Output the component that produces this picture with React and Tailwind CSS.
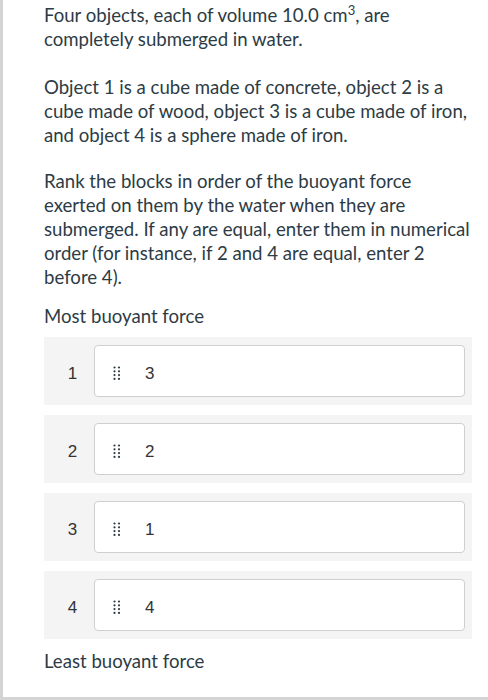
import React from 'react';

const rows = [
  { rank: 1, value: '3' },
  { rank: 2, value: '2' },
  { rank: 3, value: '1' },
  { rank: 4, value: '4' },
];

const Grip = () => (
  <svg width="8" height="16" viewBox="0 0 8 16" className="shrink-0">
    {[1.5, 5.3, 9.1, 12.9].map((y) =>
      [1.5, 6].map((x) => <circle key={`${x}-${y}`} cx={x} cy={y} r="1.1" fill="#2d3b45" />)
    )}
  </svg>
);

export default function App() {
  return (
    <div className="h-[700px] w-[488px] bg-white border-l-[3px] border-b-[3px] border-[#d4d4d4] font-['Lato','Noto_Sans',sans-serif] text-[#2d3b45] text-[18.6px] leading-[24px]">
      <div className="pl-[41px] pr-[12px] pt-[3px]">
        <p>
          Four objects, each of volume 10.0&nbsp;cm<sup className="text-[13px] -top-[7px]">3</sup>, are completely submerged in water.
        </p>
        <p className="mt-[24px]">
          Object 1 is a cube made of concrete, object 2 is a cube made of wood, object 3 is a cube made of iron, and object 4 is a sphere made of iron.
        </p>
        <p className="mt-[22px]">
          Rank the blocks in order of the buoyant force exerted on them by the water when they are submerged. If any are equal, enter them in numerical order (for instance, if 2 and 4 are equal, enter 2 before 4).
        </p>
        <p className="mt-[15px]">Most buoyant force</p>
        <div className="mt-[9px] w-[428px] flex flex-col gap-[10px]">
          {rows.map((r) => (
            <div key={r.rank} className="flex items-center bg-[#f4f4f4] py-[8px] pr-[7px] h-[68px]">
              <div className="w-[50px] pl-[7px] pt-[6px] text-center font-['Liberation_Sans',Arial,sans-serif] text-[17px] text-[#333]">{r.rank}</div>
              <div className="flex-1 h-[52px] bg-white border border-[#cfcfcf] rounded-[4px] flex items-center pl-[18px] pt-[6px] gap-[24px] font-['Liberation_Sans',Arial,sans-serif] text-[17px] text-[#333]">
                <Grip />
                <span>{r.value}</span>
              </div>
            </div>
          ))}
        </div>
        <p className="mt-[10px]">Least buoyant force</p>
      </div>
    </div>
  );
}
